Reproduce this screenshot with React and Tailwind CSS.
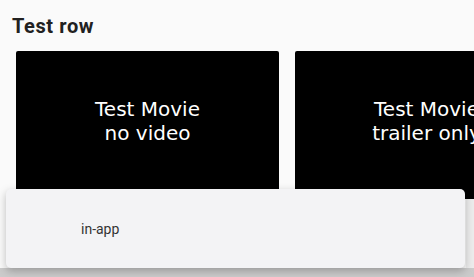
import React from 'react';

const movies = [
  { id: 1, title: 'Test Movie', sub: 'no video' },
  { id: 2, title: 'Test Movie', sub: 'trailer only' },
];

const MovieCard = ({ movie }) => (
  <div className="w-[263px] h-[148px] shrink-0 bg-black rounded-[2px] flex flex-col items-center justify-center text-white text-[20px] leading-[24px] font-['DejaVu_Sans',sans-serif] text-center pb-[8px]">
    <span className="whitespace-nowrap">{movie.title}</span>
    <span className="whitespace-nowrap">{movie.sub}</span>
  </div>
);

export default function App() {
  return (
    <div className="relative w-[474px] h-[277px] overflow-hidden bg-[#fafafa] font-['Roboto',sans-serif]">
      <h2 className="pl-[12px] pt-[13px] text-[20px] leading-[26px] font-bold text-[#212121] tracking-[0.6px]">
        Test row
      </h2>
      <div className="flex gap-[16px] pl-[16px] mt-[12px]">
        {movies.map((m) => (
          <MovieCard key={m.id} movie={m} />
        ))}
      </div>
      <div className="flex h-[69px]">
        <div className="flex-1 bg-[#fafafa]" />
        <div className="w-[8px] bg-[#ececec]" />
      </div>
      <div className="h-[20px] bg-[#cbcbcb]" />

      <div className="absolute left-[6px] top-[189px] w-[459px] h-[79px] rounded-[5px] bg-[#f3f3f5] shadow-[0_3px_8px_rgba(0,0,0,0.25)] flex items-center pl-[75px]">
        <span className="text-[14px] text-[#333] pt-[2px]">in-app</span>
      </div>
    </div>
  );
}
